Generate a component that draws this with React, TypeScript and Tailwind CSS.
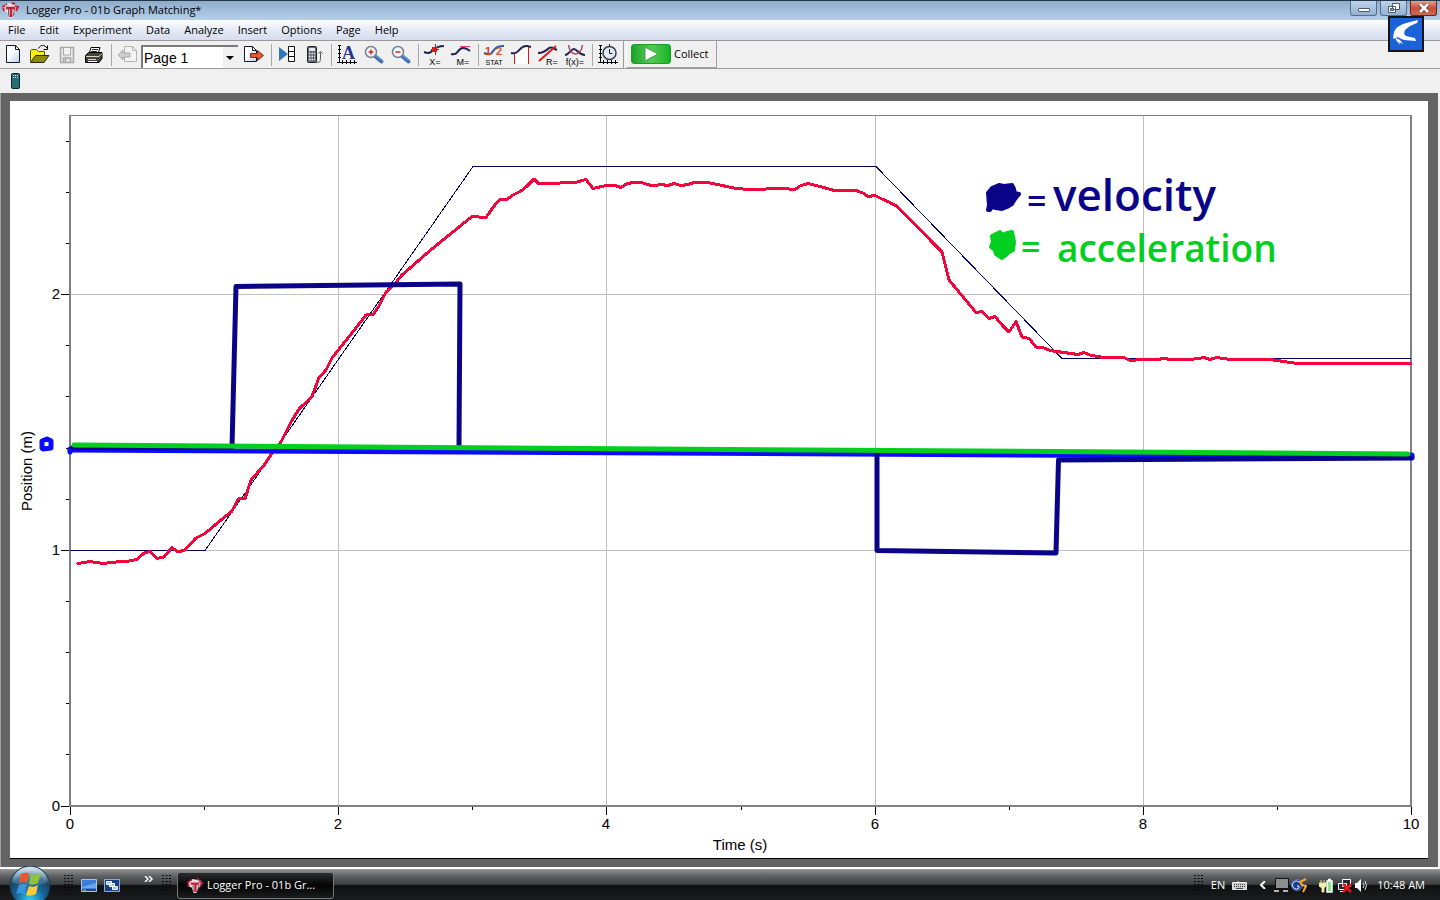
import React, { useState } from "react";

const MENU = ["File", "Edit", "Experiment", "Data", "Analyze", "Insert", "Options", "Page", "Help"];

/* ------------------------ GRAPH DATA ------------------------ */
const X_MAJOR = [0, 2, 4, 6, 8, 10];
const X_MINOR = [1, 3, 5, 7, 9];
const Y_MAJOR = [0, 1, 2];
const Y_MINOR = [0.2, 0.4, 0.6, 0.8, 1.2, 1.4, 1.6, 1.8, 2.2, 2.4, 2.6];

const px = (t: number) => Math.round(70 + t * 134.1);
const py = (v: number) => Math.round(805.5 - v * 255.7);

const TARGET = "70,550.5 205,550.5 473,166.5 876,166.5 1062,358.5 1411,358.5";

const MEASURED =
  "78,563.5 90,561.5 103,563.5 116,562 126,561.5 137,559.5 144,553 150,551.5 157,558.5 164,557 172,547.5 178,552 185,550 196,538 205,533.5 215,525 232,511 239,498 245,498.5 251,480 265,464 272,453 281,442 291,422 299,409 312,396.5 319,377.5 326,370 332,358 352,333 366,315 373,314.5 379,306 386,292 394,285 402,275 430,250.5 472,216.5 486,217.5 494,206 500,199.5 507,199.5 513,195 521,191 527,186 534,179 539,184 546,183.5 558,183.5 562,182.5 575,182.5 586,179.5 593,188.5 606,185.5 615,185.5 621,187.5 627,183.5 634,182.5 641,182.5 653,186 661,184.5 668,185.5 674,183.5 681,185.5 688,184.5 694,182.5 708,182.5 722,185.5 734,188 748,189.5 762,189.5 770,188.5 783,188.5 795,189.5 800,186 808,183.5 822,187 834,190.5 856,190.5 863,193 868,196.5 875,195.5 882,199 890,202.5 897,206.5 942,252 949,280 976,312.5 982,311.5 989,318.5 995,316.5 1003,326 1009,332 1016,321.5 1022,337 1029,338.5 1036,347 1043,347.5 1050,350.5 1064,352.5 1078,354.5 1084,352.5 1090,355 1103,357.5 1124,357.5 1130,360.5 1143,359.5 1157,359.5 1164,358.5 1171,359.5 1191,359.5 1204,357.5 1210,359.5 1217,357.5 1230,359.5 1270,359.5 1284,361.5 1297,363.5 1411,364";

/* ------------------------ TOOLBAR ------------------------ */
function ToolButton({ label, children, onClick }: { label: string; children: React.ReactNode; onClick?: () => void }) {
  return (
    <button aria-label={label} title={label} onClick={onClick} className="h-[27px] w-[27px] shrink-0">
      <svg viewBox="0 0 27 27" className="h-[27px] w-[27px]" fill="none">
        {children}
      </svg>
    </button>
  );
}

function Separator() {
  return (
    <div className="flex h-[27px] w-1.5 shrink-0 items-center justify-center">
      <div className="h-[22px] w-px bg-[#a8a8a8]" />
    </div>
  );
}

function Caption({ x, children }: { x: number; children: string }) {
  return (
    <text x={x} y="24" fontSize="9" textAnchor="middle" fill="#000" fontFamily="Liberation Sans, sans-serif">
      {children}
    </text>
  );
}

function Ruler() {
  return (
    <>
      <path d="M5.500 4V21.500H23" stroke="#000" />
      <path d="M4 4.500h3M4 8.500h3M4 12.500h3M4 16.500h3M3 21.500h3" stroke="#000" />
      <path d="M8.500 19v4M12.500 19v4M16.500 19v4M20.500 19v4" stroke="#000" />
    </>
  );
}

function Lens({ plus }: { plus?: boolean }) {
  return (
    <>
      <path d="M14 15l6.500 5.500" stroke="#3f73b5" strokeWidth="4" strokeLinecap="round" />
      <path d="M15 14.500l6 5" stroke="#7ea6d4" strokeWidth="1" />
      <circle cx="10" cy="11" r="5.500" fill="#f3f5fa" stroke="#77808c" strokeWidth="1.500" />
      <path d={plus ? "M7.500 11h5M10 8.500v5" : "M7.500 11h5"} stroke="#d22b16" strokeWidth="1.500" />
    </>
  );
}

const PageSheet = ({ x, stroke = "#10182c", fill = "url(#sheet)" }: { x: number; stroke?: string; fill?: string }) => (
  <g transform={`translate(${x} 0)`}>
    <path d="M.5 5.500h8l4 4v11H.5z" fill={fill} stroke={stroke} />
    <path d="M8.500 5.500v4h4" stroke={stroke} />
  </g>
);

function Toolbar() {
  const [page, setPage] = useState("Page 1");

  return (
    <div className="flex h-7 items-center border-t border-[#9a9a9a] bg-[#f0f0f0]">
      <ToolButton label="New">
        <defs>
          <linearGradient id="sheet" x1="0" y1="0" x2="1" y2="1">
            <stop offset=".4" stopColor="#fff" />
            <stop offset="1" stopColor="#bcd0ee" />
          </linearGradient>
        </defs>
        <path d="M6.500 4.500h9l4 4v13h-13z" fill="url(#sheet)" stroke="#10182c" />
        <path d="M15.500 4.500v4h4" stroke="#10182c" />
      </ToolButton>
      <ToolButton label="Open">
        <path d="M3.500 20.500v-11l1-1h5l2 2h6v4" fill="#f4ee16" stroke="#55500c" />
        <path d="M3.500 21.500l5-7h13.500l-5 7z" fill="#8f8a12" stroke="#2b2906" />
        <path d="M11.500 7.500c2-4 6-4 8.500-.5M20.500 4.500v4h-4" stroke="#000" />
      </ToolButton>
      <ToolButton label="Save">
        <path d="M6.500 6.500h13v15h-13z" fill="#e6e6e6" stroke="#a9a9a9" strokeWidth="1.500" />
        <path d="M9.500 7v7h7V7" fill="#f2f2f2" stroke="#a9a9a9" />
        <path d="M9.500 21v-4h7v4M11.500 18v3" stroke="#a9a9a9" strokeWidth="1.500" />
      </ToolButton>
      <ToolButton label="Print">
        <path d="M8 13l2-6.500h9L17 13z" fill="#fff" stroke="#000" />
        <path d="M11 8.500h6M10 10.500h6" stroke="#222" />
        <path d="M4.500 14.500l3-3h13.500v6l-3 4h-13.500z" fill="#44443c" stroke="#000" />
        <path d="M5 15.500h13l3-3" stroke="#d9d9c9" />
        <path d="M7 18.500h8" stroke="#e8e36a" />
        <path d="M7 20.500h9" stroke="#fff" />
      </ToolButton>
      <Separator />
      <ToolButton label="Previous page">
        <PageSheet x={10} stroke="#b4b4b4" fill="#f4f4f4" />
        <path d="M4 14l5-5v3h7v4H9v3z" fill="#cfcfcf" stroke="#a8a8a8" />
      </ToolButton>
      <select
        aria-label="Page"
        value={page}
        onChange={(e) => setPage(e.target.value)}
        className="mr-[3px] mt-1 h-6 w-[97px] shrink-0 appearance-none border-l-2 border-t-2 border-[#7a7a7a] bg-white bg-[linear-gradient(#f0f0f0,#f0f0f0)] bg-[length:15px_100%] bg-right bg-no-repeat pl-px font-['Liberation_Sans',sans-serif] text-[14px] leading-5 text-black"
      >
        <option>Page 1</option>
      </select>
      <svg viewBox="0 0 8 4" className="pointer-events-none relative z-10 -ml-[15px] mr-[7px] mt-1.5 h-1 w-2 shrink-0">
        <path d="M0 0h8L4 4z" fill="#000" />
      </svg>
      <ToolButton label="Next page">
        <PageSheet x={3} />
        <path d="M9.500 12.500h7v-3l6 5-6 5v-3h-7z" fill="#e2592d" stroke="#7b2410" />
      </ToolButton>
      <Separator />
      <ToolButton label="Data browser">
        <path d="M5 6l9 7-9 7z" fill="#2f77b8" />
        <path d="M14.500 5.500h6v15h-6zM14.500 10.500h6M14.500 15.500h6" fill="#fff" stroke="#111" />
      </ToolButton>
      <ToolButton label="Calculator">
        <rect x="6.500" y="5.500" width="9" height="16" rx="1" fill="#666c73" stroke="#222" />
        <path d="M8 7h6v3H8z" fill="#dfe8ee" />
        <path d="M8 12.500h6M8 15.500h6M8 18.500h6" stroke="#e8e8e8" strokeWidth="1.500" strokeDasharray="1.500 1" />
        <path d="M15 21.500c4 0 4.500-1 4.500-4v-6M17.500 12.500l2-2 2 2" stroke="#555" />
      </ToolButton>
      <Separator />
      <ToolButton label="Autoscale">
        <Ruler />
        <text x="8" y="18" fontSize="18" fontWeight="700" fill="#27348c" fontFamily="Liberation Serif, serif">A</text>
      </ToolButton>
      <ToolButton label="Zoom in"><Lens plus /></ToolButton>
      <ToolButton label="Zoom out"><Lens /></ToolButton>
      <Separator />
      <ToolButton label="Examine">
        <path d="M3 11c10 4 6-6 20-6" stroke="#1d2550" strokeWidth="2" />
        <path d="M14.500 3v11M10 8.500h8" stroke="#a02020" />
        <path d="M11 6h5v5h-5z" fill="#e01818" />
        <Caption x={14}>X=</Caption>
      </ToolButton>
      <ToolButton label="Tangent">
        <path d="M12 5.500h10" stroke="#e04747" />
        <path d="M3 13c8 2 6-6 12-6 4 0 4 1 7 3" stroke="#1d2550" strokeWidth="2" />
        <Caption x={15}>M=</Caption>
      </ToolButton>
      <Separator />
      <ToolButton label="Statistics">
        <path d="M3 12c12 5 6-8 20-7" stroke="#3855a0" strokeWidth="2" />
        <text x="4" y="14" fontSize="11" fontWeight="700" fill="#dc3b22" fontFamily="Liberation Sans, sans-serif">1</text>
        <text x="15" y="14" fontSize="11" fontWeight="700" fill="#e0552c" fontFamily="Liberation Sans, sans-serif">2</text>
        <text x="13" y="24" fontSize="7" textAnchor="middle" fill="#000" fontFamily="Liberation Sans, sans-serif">STAT</text>
      </ToolButton>
      <ToolButton label="Integral">
        <path d="M6 13c6 0 7-7 14-7v17H6z" fill="#fff" />
        <path d="M6.500 12v11M20.500 5v18" stroke="#e01818" />
        <path d="M3 12c9 2 8-8 16-7l4 1" stroke="#1d2550" strokeWidth="2" />
      </ToolButton>
      <ToolButton label="Linear fit">
        <path d="M3 12c4 0 8-2 11-5 3-2 5 1 8 2" stroke="#1d2550" strokeWidth="2" />
        <path d="M4 20L21 5" stroke="#e01818" strokeWidth="2" />
        <Caption x={17}>R=</Caption>
      </ToolButton>
      <ToolButton label="Curve fit">
        <path d="M3 14c4 0 6-6 9-6 3 0 5 6 11 6" stroke="#1d2550" strokeWidth="2" />
        <path d="M6.500 4c2 12 12 12 14 0" stroke="#a84058" strokeWidth="1.500" />
        <Caption x={13}>f(x)=</Caption>
      </ToolButton>
      <Separator />
      <ToolButton label="Data collection">
        <Ruler />
        <circle cx="14.500" cy="12" r="6.500" fill="#e3eaf4" stroke="#38404e" strokeWidth="1.500" />
        <path d="M14.500 8v4.500h3M14.500 3v3" stroke="#222" />
      </ToolButton>
      <div className="ml-px mr-[2px] h-full w-px shrink-0 bg-[#9a9a9a]" />
      <button className="flex h-[27px] shrink-0 items-center gap-[3px] border-b border-l border-r border-[#a0a0a0] border-l-white pl-1 pr-2 text-[11px] leading-4">
        <span className="flex h-5 w-10 items-center justify-center rounded-[3px] border border-[#1e9d2a] bg-linear-to-r from-[#13a526] via-[#52cb56] to-[#0fb421]">
          <svg viewBox="0 0 16 16" className="h-4 w-4">
            <path d="M2 1l13 7-13 7z" fill="#fff" stroke="#4e9a55" />
          </svg>
        </span>
        Collect
      </button>
    </div>
  );
}

/* ------------------------ GRAPH ------------------------ */
function Graph() {
  return (
    <svg viewBox="10 101 1418 757" className="h-full w-full font-['Liberation_Sans',sans-serif] text-[15px]" fill="none">
      <g stroke="#c0c0c0" shapeRendering="crispEdges">
        {X_MAJOR.slice(1, 5).map((t) => (
          <path key={t} d={`M${px(t) + 0.5} 116V805`} />
        ))}
        {Y_MAJOR.slice(1).map((v) => (
          <path key={v} d={`M71 ${py(v) + 0.5}H1411`} />
        ))}
      </g>
      <path d="M70 115.500H1411" stroke="#808080" />
      <path d="M1411 115V806" stroke="#808080" strokeWidth="2" />
      <path d="M70 115V806H1412" stroke="#808080" strokeWidth="2" />

      <g stroke="#000" shapeRendering="crispEdges">
        {X_MAJOR.map((t) => <path key={t} d={`M${px(t) + 0.5} 807v8`} />)}
        {X_MINOR.map((t) => <path key={t} d={`M${px(t) + 0.5} 807v3`} />)}
        {Y_MAJOR.map((v) => <path key={v} d={`M61 ${py(v) + 0.5}h8`} />)}
        {Y_MINOR.map((v) => <path key={v} d={`M66 ${py(v) + 0.5}h3`} />)}
      </g>

      <g fill="#000">
        {X_MAJOR.map((t) => (
          <text key={t} x={px(t)} y="829" textAnchor="middle">{t}</text>
        ))}
        {Y_MAJOR.map((v) => (
          <text key={v} x="60" y={py(v) + 5} textAnchor="end">{v}</text>
        ))}
        <text x="740" y="850" textAnchor="middle">Time (s)</text>
        <text transform="translate(32 471) rotate(-90)" textAnchor="middle">Position (m)</text>
      </g>

      <polyline points={TARGET} stroke="#00005c" shapeRendering="crispEdges" />
      <polyline points={MEASURED} stroke="#f2063c" strokeWidth="3" strokeLinejoin="round" strokeLinecap="round" shapeRendering="crispEdges" />

      {/* pen strokes on top of the plot */}
      <g strokeLinecap="round" strokeLinejoin="round">
        <path d="M70 450L1412 457" stroke="#0a0aff" strokeWidth="5" />
        <path d="M70 449v3M1412 455v3" stroke="#0a0aff" strokeWidth="5" />
        <path d="M42 441l5-2 4 2v7l-8 1-1-1z" stroke="#0a0aff" strokeWidth="5" />
        <g stroke="#0a0489" strokeWidth="5">
          <path d="M73 447.500H232L236 286.500 460 284 459 446" />
          <path d="M877 454V550.500L1056 553 1058.500 460 1411 458" />
          <path d="M988 210l1-5-1-12 4-5 7-3 5 1 8-1 2 4 1 4 4 1-4 5-3 5-5 3-5 2-6-1-4-1-2 3z" fill="#0a0489" strokeWidth="4" />
        </g>
        <g stroke="#02cf20" strokeWidth="5">
          <path d="M74 445L1408 454" />
          <path d="M991 247l2-5-1-6 4-2 4-2 2 3 5-2 5-1 1 5 1 5-1 8-4 2-3 3-4 3-3-2-3-2-1-4z" fill="#02cf20" strokeWidth="4" />
        </g>
      </g>
      <g className="font-['Open_Sans',sans-serif] font-semibold">
        <text x="1027" y="213" className="text-[34px]" fill="#0a0489">=</text>
        <text x="1053" y="211" className="text-[44px]" fill="#0a0489">velocity</text>
        <text x="1021" y="259" className="text-[34px]" fill="#02cf20">=</text>
        <text x="1057" y="262" className="text-[37px]" fill="#02cf20">acceleration</text>
      </g>
    </svg>
  );
}

/* ------------------------ WINDOW CHROME ------------------------ */
function AppMark({ className }: { className: string }) {
  return (
    <svg viewBox="0 0 18 18" className={className} fill="none">
      <path d="M2 6l5-4 4 1 5 1 1 4-4 4-2 5H8L6 11 3 10z" fill="#eddde0" />
      <path d="M3 10L2 6l4-3" stroke="#c41f3a" strokeWidth="2" strokeDasharray="3 1" />
      <path d="M11 2l3 1M14 5l3 1-2 4" stroke="#c41f3a" strokeWidth="2" />
      <path d="M5 7h9M10 7v9" stroke="#c41f3a" strokeWidth="2.500" />
      <path d="M7.500 8v5l1 3M13 8v4l-1 3" stroke="#7c5158" />
    </svg>
  );
}

function TitleBar() {
  const button = "flex h-[15px] w-[27px] items-center justify-center rounded-b-[3px] border border-t-0";
  return (
    <header className="flex h-5 shrink-0 items-start border-t border-[#26374a] bg-linear-to-b from-[#8eaccb] to-[#b5cfe9] pr-[3px]">
      <AppMark className="ml-px h-[18px] w-[18px]" />
      <h1 className="ml-[7px] flex-1 text-[11px] leading-[18px]">Logger Pro - 01b Graph Matching*</h1>
      <div className="flex gap-[3px]">
        <button aria-label="Minimize" className={`${button} border-[#53708f] bg-linear-to-b from-[#bdd3ea] to-[#93b2d2]`}>
          <span className="mt-1 h-1 w-3 rounded-[1px] border border-[#4c5866] bg-white" />
        </button>
        <button aria-label="Restore" className={`${button} border-[#53708f] bg-linear-to-b from-[#bdd3ea] to-[#93b2d2]`}>
          <svg viewBox="0 0 12 12" className="h-3 w-3" fill="#fff" stroke="#4c5866">
            <path d="M4.500 1.500h7v6h-7zM.5 4.500h7v6h-7z" />
            <path d="M2.500 6.500h3v2h-3z" fill="#8da7c2" />
          </svg>
        </button>
        <button aria-label="Close" className={`${button} border-[#701f1b] bg-linear-to-b from-[#e2a192] via-[#c94d3b] to-[#cb6c52]`}>
          <svg viewBox="0 0 12 10" className="h-[10px] w-3">
            <path d="M2 1l8 8M10 1L2 9" stroke="#5b3b3b" strokeWidth="4" />
            <path d="M2 1l8 8M10 1L2 9" stroke="#fff" strokeWidth="2.500" />
          </svg>
        </button>
      </div>
    </header>
  );
}

const Grip = () => (
  <svg viewBox="0 0 9 20" className="h-5 w-[9px] shrink-0" stroke="#0b0b0b" strokeWidth="2">
    <path d="M1 0v20M4.500 0v20M8 0v20" strokeDasharray="1 2" />
  </svg>
);

function Taskbar() {
  return (
    <footer className="relative flex h-[30px] shrink-0 items-center bg-[linear-gradient(#8a8c8d,#5f6163_20%,#3b3d3f_48%,#0e1012_52%,#1b1d1e)] text-white">
      <button aria-label="Start" className="absolute bottom-0 left-[9px] z-20 h-[34px] w-[42px]">
        <svg viewBox="0 0 42 34" className="h-[34px] w-[42px]">
          <defs>
            <radialGradient id="orb" cx=".5" cy=".85" r=".8">
              <stop offset="0" stopColor="#2fd0f0" />
              <stop offset=".45" stopColor="#17649a" />
              <stop offset=".75" stopColor="#184466" />
              <stop offset="1" stopColor="#9cb9cb" />
            </radialGradient>
            <linearGradient id="shine" x1="0" y1="0" x2="0" y2="1">
              <stop offset="0" stopColor="#e8f3f9" stopOpacity=".85" />
              <stop offset="1" stopColor="#6694b3" stopOpacity=".25" />
            </linearGradient>
          </defs>
          <circle cx="21" cy="20" r="20" fill="url(#orb)" stroke="#17344a" />
          <path d="M4 17a17 16 0 0 1 34 0q-17 6-34 0z" fill="url(#shine)" />
          <path d="M12 8q4-2 8-1l-2 10q-4-2-8 0z" fill="#ea572c" />
          <path d="M22 8q5 2 10-1l-3 10q-5 3-9 1z" fill="#8fc33e" />
          <path d="M10 19q4-2 8 0l-3 9q-4-2-8 0z" fill="#3c93df" />
          <path d="M20 20q5 2 9-1l-2 9q-5 3-10 1z" fill="#fcca32" />
        </svg>
      </button>
      <div className="w-16 shrink-0" />
      <Grip />
      <button aria-label="Show desktop" className="ml-2">
        <svg viewBox="0 0 16 13" className="h-[13px] w-4">
          <path d="M.5.5h15v12H.5z" fill="#3c7fdb" stroke="#aec5dc" />
          <path d="M1 8l14-4v5H1z" fill="#6fa5ec" />
          <path d="M1 10h14v2H1z" fill="#26486e" />
          <path d="M2 11h3" stroke="#9fd37d" />
        </svg>
      </button>
      <button aria-label="Switch windows" className="ml-[7px]">
        <svg viewBox="0 0 16 13" className="h-[13px] w-4">
          <path d="M.5.5h15v12H.5z" fill="#153f83" stroke="#8facd0" />
          <path d="M2.500 2.500h5v3h-5zM5.500 4.500h5v3h-5zM8.500 7.500h5v3h-5z" fill="#9fc1e8" stroke="#fff" />
        </svg>
      </button>
      <button aria-label="More toolbars" className="-mt-3 ml-6 w-3">
        <svg viewBox="0 0 9 6" className="h-1.5 w-[9px]" fill="none" stroke="#fff" strokeWidth="1.500">
          <path d="M1 0l3 3-3 3M5 0l3 3-3 3" />
        </svg>
      </button>
      <div className="w-[6px] shrink-0" />
      <Grip />
      <button className="ml-[6px] flex h-[27px] w-[157px] items-center gap-1 rounded-[3px] border border-[#777] bg-linear-to-b from-[#2c2d2e] via-[#050505] to-[#1c1d1e] pl-2 text-[11px] whitespace-nowrap">
        <AppMark className="h-[17px] w-[17px]" />
        Logger Pro - 01b Gr...
      </button>

      <div className="ml-auto flex items-center">
        <Grip />
        <span className="ml-2 text-[11px] leading-4">EN</span>
        <svg viewBox="0 0 15 9" className="ml-[7px] h-[9px] w-[15px]">
          <path d="M.5 1.500h14v7H.5zM6 1V0" fill="#ccc" stroke="#e8e8e8" />
          <path d="M2 3.500h11M2 5.500h11" stroke="#444" strokeDasharray="1 1" />
          <path d="M4 7.500h7" stroke="#444" />
        </svg>
        <button aria-label="Show hidden icons" className="ml-3">
          <svg viewBox="0 0 7 8" className="h-2 w-[7px]" fill="none" stroke="#fff" strokeWidth="2">
            <path d="M6 0L2 4l4 4" />
          </svg>
        </button>
        <svg viewBox="0 0 15 15" className="ml-2 h-[15px] w-[15px]">
          <path d="M1.500.5h13v10h-13z" fill="#8b8e8e" stroke="#111" />
          <path d="M0 12h5v2H0zM9 12h5v2H9z" fill="#b4b4b4" />
        </svg>
        <svg viewBox="0 0 16 15" className="ml-[2px] h-[15px] w-4">
          <circle cx="6" cy="7" r="5.500" fill="#183f94" stroke="#5479c0" />
          <path d="M8 4a4 4 0 1 0 0 6V8H6" fill="none" stroke="#dce7fa" />
          <path d="M15 1L9 4l2 3 4 1-3 6" fill="none" stroke="#f4a52b" strokeWidth="2" />
        </svg>
        <svg viewBox="0 0 15 15" className="ml-3 h-[15px] w-[15px]">
          <path d="M8 3h5v11H8zM9 1.500h3" fill="#8be08e" stroke="#fff" strokeWidth="1.500" />
          <path d="M0 5h7v3L5 10v4H3v-4L0 8zM2 2v3M5 2v3" fill="#f3efa9" stroke="#e9e2a0" />
        </svg>
        <svg viewBox="0 0 15 15" className="ml-[3px] h-[15px] w-[15px]">
          <path d="M5.500 1.500h8v7h-8zM1.500 5.500h8v6h-8zM3 13.500h5" fill="#252a30" stroke="#fff" />
          <path d="M6 6l8 8M14 6l-8 8" stroke="#f01414" strokeWidth="2.500" />
        </svg>
        <svg viewBox="0 0 14 15" className="ml-[3px] h-[15px] w-[14px]" fill="none">
          <path d="M0 5h2l4-4v13l-4-4H0z" fill="#fff" />
          <path d="M8 5q2 2.500 0 5M10 3q3 4.500 0 9" stroke="#d9e6ef" />
        </svg>
        <time className="ml-2 mr-[15px] text-[11px] leading-4 whitespace-nowrap">10:48 AM</time>
      </div>
    </footer>
  );
}

export default function App() {
  return (
    <div className="relative flex h-screen min-h-[600px] flex-col overflow-hidden bg-[#f0f0f0] font-['Open_Sans',sans-serif] text-[12px] text-black">
      <TitleBar />
      <nav className="flex h-5 shrink-0 items-center bg-linear-to-b from-white via-[#e6eaf6] to-[#d5dcee] pl-px">
        {MENU.map((item) => (
          <button key={item} className="px-[7px] text-[11px] leading-5">
            {item}
          </button>
        ))}
      </nav>
      <Toolbar />
      <div className="flex h-[25px] shrink-0 items-center border-t border-[#9a9a9a] bg-[#f0f0f0] pl-[11px]">
        <button aria-label="Sensor">
          <svg viewBox="0 0 9 16" className="h-4 w-[9px]">
            <rect x=".5" y=".5" width="8" height="15" rx="1" fill="#1f6f74" stroke="#0b2528" />
            <path d="M2 2.500h5M2 4.500h5" stroke="#d5e6e6" strokeDasharray="1 1" />
          </svg>
        </button>
      </div>

      <main className="min-h-0 flex-1 border-l border-r-2 border-l-[#a0a0a0] border-r-[#f0f0f0] bg-[#646464] pb-2 pl-[9px] pr-[10px] pt-2">
        <div className="h-full border-b border-black bg-white">
          <Graph />
        </div>
      </main>
      <div className="h-[3px] shrink-0 border-t-2 border-white bg-[#9a9a9a]" />
      <Taskbar />

      {/* floating ink tool */}
      <button aria-label="Ink tool" className="absolute right-4 top-4 h-9 w-9 border-2 border-[#151515] bg-[#1b62d8]">
        <svg viewBox="0 0 32 32" className="h-8 w-8" fill="#fff">
          <path d="M28 2L16 5Q6 8 4 14L3 20l2 1 2-2 7 3 12 1-1-3-9-2-2-2 1-4 5-4 7-3z" />
          <path d="M6 20l4 2 3 4-4-2 1 3-4-5z" />
        </svg>
      </button>
    </div>
  );
}
